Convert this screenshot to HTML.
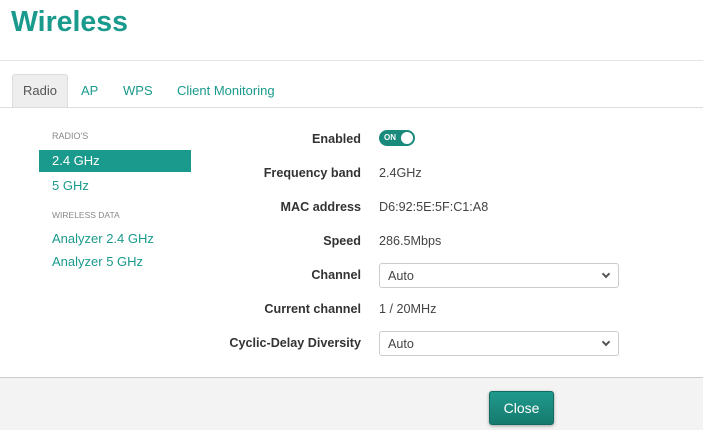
<!DOCTYPE html>
<html><head><style>
body{margin:0;width:703px;height:429px;overflow:hidden;background:#fff;font-family:"Liberation Sans",Arial,sans-serif;position:relative}
.a{position:absolute;white-space:nowrap}
h1{position:absolute;left:11px;top:6px;margin:0;font-size:28.5px;font-weight:bold;color:#1a9a8c}
.lbl{font-size:12.6px;font-weight:bold;color:#333;text-align:right;right:342px}
.val{font-size:12.6px;color:#444;left:379px}
.sel{position:absolute;left:379px;width:240px;height:24px;border:1px solid #ccc;border-radius:3px;background:#fff;box-sizing:border-box;font-size:12.6px;color:#444;padding:5px 8px}
.sel:after{content:"";position:absolute;right:9px;top:7px;width:4px;height:4px;border-right:2px solid #555;border-bottom:2px solid #555;transform:rotate(45deg)}
</style></head><body>
<h1>Wireless</h1>
<div class="a" style="left:0;top:60px;width:703px;height:1px;background:#e5e5e5"></div>
<div class="a" style="left:12px;top:74px;width:56px;height:33px;background:#eee;border:1px solid #ddd;border-bottom:none;border-radius:3px 3px 0 0;box-sizing:border-box"></div>
<div class="a" style="left:0;top:107px;width:703px;height:1px;background:#ddd"></div>
<div class="a" style="left:23px;top:83px;font-size:13px;color:#555">Radio</div>
<div class="a" style="left:81px;top:83px;font-size:13px;color:#1a9a8c">AP</div>
<div class="a" style="left:123px;top:83px;font-size:13px;color:#1a9a8c">WPS</div>
<div class="a" style="left:177px;top:83px;font-size:13px;color:#1a9a8c">Client Monitoring</div>
<div class="a" style="left:52px;top:131px;font-size:9px;color:#888">RADIO'S</div>
<div class="a" style="left:39px;top:150px;width:152px;height:22px;background:#1a9a8c"></div>
<div class="a" style="left:52px;top:153px;font-size:13px;color:#fff">2.4 GHz</div>
<div class="a" style="left:52px;top:178px;font-size:13px;color:#1a9a8c">5 GHz</div>
<div class="a" style="left:52px;top:210px;font-size:8.5px;color:#888">WIRELESS DATA</div>
<div class="a" style="left:52px;top:231px;font-size:13px;color:#1a9a8c">Analyzer 2.4 GHz</div>
<div class="a" style="left:52px;top:254px;font-size:13px;color:#1a9a8c">Analyzer 5 GHz</div>

<div class="a lbl" style="top:132px">Enabled</div>
<div class="a" style="left:379px;top:130px;width:36px;height:16px;border-radius:8px;background:#1a8a7c"></div>
<div class="a" style="left:384px;top:133px;font-size:8px;font-weight:bold;color:#fff">ON</div>
<div class="a" style="left:400px;top:131px;width:12px;height:12px;border-radius:7px;background:#fff;border:1px solid #1a8a7c"></div>
<div class="a lbl" style="top:166px">Frequency band</div><div class="a val" style="top:166px">2.4GHz</div>
<div class="a lbl" style="top:200px">MAC address</div><div class="a val" style="top:200px">D6:92:5E:5F:C1:A8</div>
<div class="a lbl" style="top:234px">Speed</div><div class="a val" style="top:234px">286.5Mbps</div>
<div class="a lbl" style="top:268px">Channel</div><div class="sel" style="top:263px;height:25px">Auto</div>
<div class="a lbl" style="top:336px">Cyclic-Delay Diversity</div><div class="sel" style="top:331px;height:25px">Auto</div>
<div class="a lbl" style="top:302px">Current channel</div><div class="a val" style="top:302px">1 / 20MHz</div>

<div class="a" style="left:0;top:377px;width:703px;height:52px;background:#f3f3f3;border-top:1px solid #ccc"></div>
<div class="a" style="left:489px;top:391px;width:65px;height:34px;background:linear-gradient(#1f9a8c,#167a6e);border:1px solid #126b60;border-radius:3px;box-sizing:border-box;box-shadow:0 1px 3px rgba(0,0,0,.35);color:#fff;font-size:14px;text-align:center;line-height:33px">Close</div>
</body></html>
